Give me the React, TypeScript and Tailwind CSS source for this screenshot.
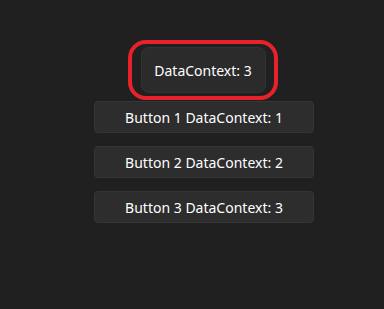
import React from "react";

const font = { fontFamily: '"Segoe UI", "Noto Sans", "Open Sans", sans-serif' };

export default function App() {
  return (
    <div className="w-[384px] h-[309px] bg-[#202020] text-white overflow-hidden" style={font}>
      <div className="flex flex-col items-start pt-[40px] pl-[94px]">
        <div className="ml-[34px] w-[150px] h-[60px] border-[4px] border-[#e8222b] rounded-[18px] flex items-center justify-center">
          <div className="w-[125px] h-[46px] rounded-[8px] bg-[#2b2b2b] border border-[#333333] flex items-center justify-center text-[14px]">
            DataContext: 3
          </div>
        </div>
        <div className="mt-[1px] flex flex-col gap-[13px]">
          {[1, 2, 3].map((n) => (
            <div
              key={n}
              className="w-[220px] h-[32px] rounded-[4px] bg-[#2d2d2d] border border-[#353535] flex items-center justify-center text-[14px]"
            >
              Button {n} DataContext: {n}
            </div>
          ))}
        </div>
      </div>
    </div>
  );
}
